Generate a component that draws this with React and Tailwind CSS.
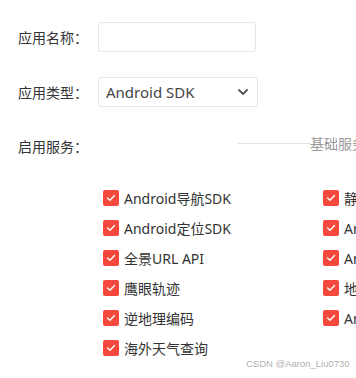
import React from "react";

const font = { fontFamily: '"Noto Sans", "Noto Sans CJK SC", sans-serif' };

function Check({ label }) {
  return (
    <div className="flex h-[30px] items-center gap-[5px] whitespace-nowrap">
      <span className="flex h-[16px] w-[16px] shrink-0 items-center justify-center rounded-[2px] bg-[#f5473c]">
        <svg width="10" height="8" viewBox="0 0 10 8" fill="none">
          <path d="M1.5 4 L4 6.3 L8.5 1.6" stroke="white" strokeWidth="1.4" strokeLinecap="round" strokeLinejoin="round" />
        </svg>
      </span>
      <span className="text-[14px] text-[#333]">{label}</span>
    </div>
  );
}

export default function App() {
  const col1 = ["Android导航SDK", "Android定位SDK", "全景URL API", "鹰眼轨迹", "逆地理编码", "海外天气查询"];
  const col2 = ["静态图API", "Android地图SDK", "Android导航HUD SDK", "地点输入提示", "Android全景SDK"];
  return (
    <div className="relative h-[378px] w-[356px] overflow-hidden bg-white pt-[22px]" style={font}>
      <div className="flex h-[30px] items-center">
        <span className="w-[98px] shrink-0 pl-[18px] text-[14px] text-[#333]">应用名称：</span>
        <div className="h-[30px] w-[158px] shrink-0 rounded-[3px] border border-[#e3e6eb] bg-white" />
      </div>
      <div className="mt-[25px] flex h-[30px] items-center">
        <span className="w-[98px] shrink-0 pl-[18px] text-[14px] text-[#333]">应用类型：</span>
        <div className="flex h-[30px] w-[160px] shrink-0 items-center justify-between rounded-[3px] border border-[#e3e6eb] bg-white pl-[7px] pr-[9px]">
          <span className="text-[15px] text-[#444]">Android SDK</span>
          <svg width="10" height="6" viewBox="0 0 10 6" fill="none">
            <path d="M1 1 L5 5 L9 1" stroke="#555" strokeWidth="1.8" strokeLinecap="round" strokeLinejoin="round" />
          </svg>
        </div>
      </div>
      <div className="mt-[25px] flex h-[30px] items-start">
        <span className="w-[98px] shrink-0 pl-[18px] text-[14px] leading-[30px] text-[#333]">启用服务：</span>
        <div className="ml-[140px] mt-[1px] flex h-[20px] shrink-0 items-center whitespace-nowrap">
          <div className="h-px w-[72px] bg-[#e2e2e2]" />
          <span className="text-[14px] text-[#999]">基础服务</span>
        </div>
      </div>
      <div className="ml-[103px] mt-[21px] flex">
        <div className="w-[220px] shrink-0">
          {col1.map((l) => (
            <Check key={l} label={l} />
          ))}
        </div>
        <div className="shrink-0">
          {col2.map((l) => (
            <Check key={l} label={l} />
          ))}
        </div>
      </div>
      <div className="absolute left-[246px] top-[357px] whitespace-nowrap text-[9.5px] text-[#b0b0b0]" style={{ fontFamily: '"Liberation Sans", sans-serif' }}>
        CSDN @Aaron_Liu0730
      </div>
    </div>
  );
}
